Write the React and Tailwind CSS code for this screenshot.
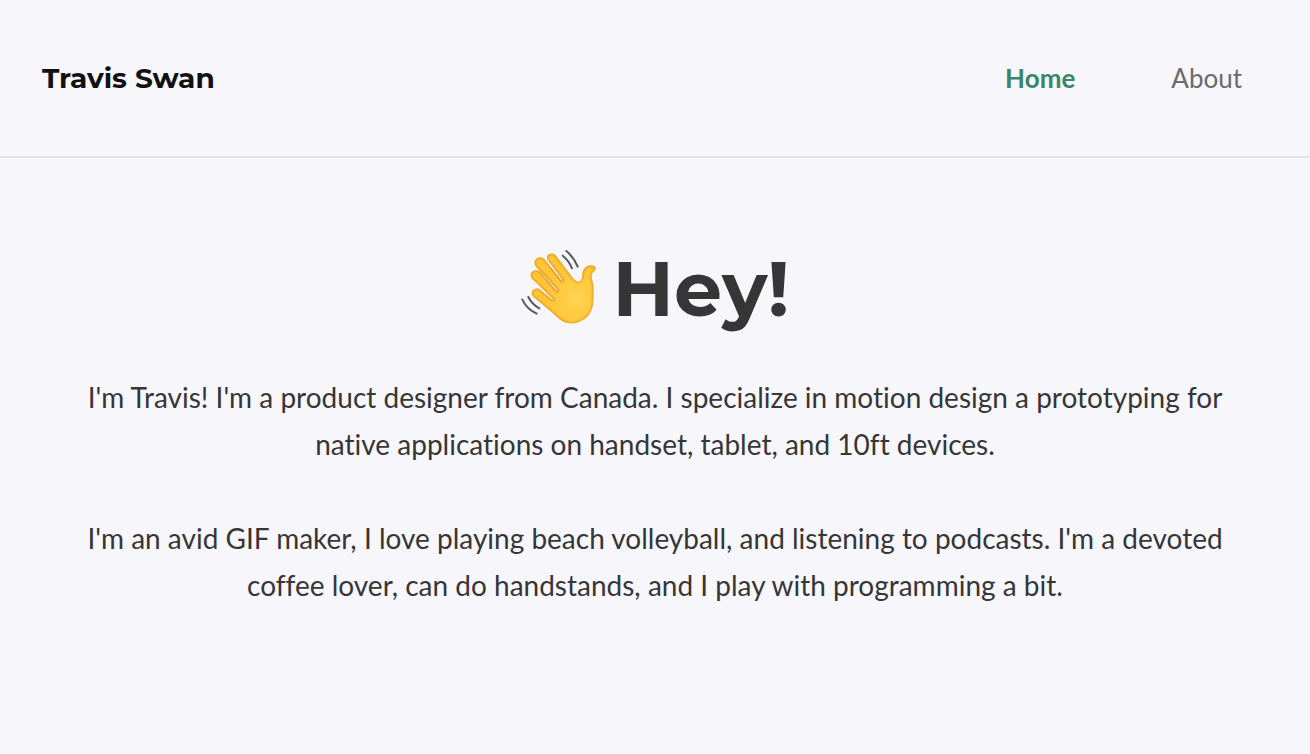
function WavingHand() {
  return (
    <svg viewBox="33 26 240 240" className="size-20 shrink-0" role="img" aria-label="Waving hand">
      <defs>
        <radialGradient id="skin" gradientUnits="userSpaceOnUse" cx="200" cy="176" r="120">
          <stop offset="0" stopColor="#ffd556" />
          <stop offset="0.3" stopColor="#ffcd45" />
          <stop offset="0.7" stopColor="#ffc738" />
          <stop offset="1" stopColor="#fec636" />
        </radialGradient>
        <filter id="soft" x="-20%" y="-20%" width="140%" height="140%">
          <feGaussianBlur stdDeviation="2.4" />
        </filter>
        <path
          id="hand"
          d="M113 59C105 45 122 32 136 44L189 113C196 123 207 129 214 118C218 108 215 96 222 86C230 75 244 73 253 77C262 83 255 91 250 95C243 103 244 112 248 124C252 140 251 158 250 183C249 207 239 225 223 237C207 247 190 251 176 249C156 245 143 232 127 217L71 170C55 156 75 135 92 149L126 179C130 183 132 179 129 176L66 115C52 99 75 80 91 95L138 151C143 154 145 151 142 148L78 79C63 62 87 39 104 57L153 120C158 125 161 123 158 119Z"
        />
        <clipPath id="hand-clip">
          <use href="#hand" />
        </clipPath>
      </defs>
      <g clipPath="url(#hand-clip)">
        <rect x="33" y="26" width="228" height="228" fill="url(#skin)" />
        <use href="#hand" fill="none" stroke="#dc8a1c" strokeWidth="5" filter="url(#soft)" />
      </g>
      <g fill="none" stroke="#cf8420" strokeWidth="1.6" strokeLinecap="round">
        <path d="M110 165L125 179Q131 183 130 177" />
        <path d="M110 118L138 150Q144 154 143 149" />
        <path d="M122 82L153 119Q159 125 158 119" />
      </g>
      <g fill="none" stroke="#59595c" strokeWidth="6" strokeLinecap="round">
        <path d="M169 32Q191 50 203 79" />
        <path d="M158 46Q177 61 186 84" />
        <path d="M37 178Q51 207 80 220" />
        <path d="M55 170Q66 192 88 204" />
      </g>
    </svg>
  );
}

export default function App() {
  return (
    <div className="min-h-screen bg-[#f7f6fb] font-['Lato',sans-serif] text-[#363636]">
      <header className="flex items-center justify-between border-b-2 border-[#e4e3e8] px-[42px] py-14">
        <a
          href="#home"
          className="font-['Montserrat','Inter',sans-serif] text-[28px] leading-[44px] font-bold text-[#111111]"
        >
          Travis Swan
        </a>
        <nav className="flex gap-24 pr-[26px] text-[26px] leading-[44px]">
          <a href="#home" aria-current="page" className="font-bold text-[#388766]">
            Home
          </a>
          <a href="#about" className="text-[#6b6b6b]">
            About
          </a>
        </nav>
      </header>
      <main className="px-[84px] pt-[85px] text-center">
        <h1 className="flex items-center justify-center gap-3 font-['Montserrat','Inter',sans-serif] text-[76px] leading-[92px] font-bold">
          <WavingHand />
          Hey!
        </h1>
        <div className="mt-[39px] flex flex-col gap-[47px] text-[28px] leading-[47px] [font-variant-ligatures:none]">
          <p>
            I'm Travis! I'm a product designer from Canada. I specialize in motion design a prototyping for
            native applications on handset, tablet, and 10ft devices.
          </p>
          <p>
            I'm an avid GIF maker, I love playing beach volleyball, and listening to podcasts. I'm a devoted
            coffee lover, can do handstands, and I play with programming a bit.
          </p>
        </div>
      </main>
    </div>
  );
}
